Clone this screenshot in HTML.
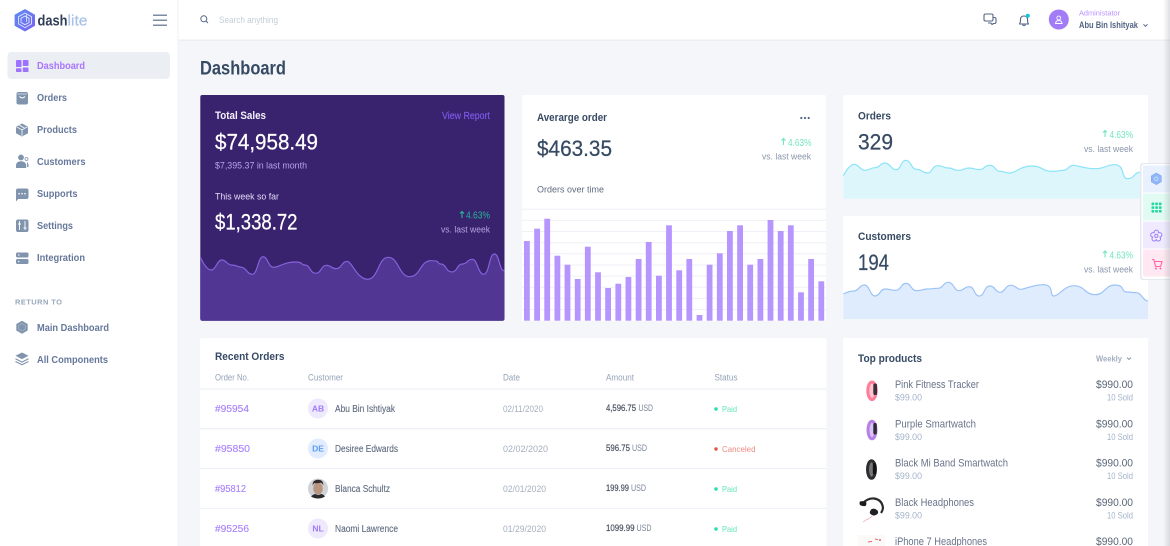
<!DOCTYPE html>
<html lang="en"><head><meta charset="utf-8"><title>Dashboard</title>
<style>
html,body{margin:0;padding:0;width:1170px;height:546px;overflow:hidden;background:#f5f6fa}
svg{display:block;filter:blur(.35px)}
text{font-family:"Liberation Sans",sans-serif;font-size:9.5px}
.n{font-size:10.5px;font-weight:700;fill:#66789a}
.h{font-size:11px;font-weight:700;fill:#364a63}
.big{font-size:22px;fill:#364a63;stroke:#364a63;stroke-width:.25}
.w{font-size:22px;fill:#fff;stroke:#fff;stroke-width:.25}
.up{font-size:10px;fill:#6fe6c0}
.vs{font-size:9.6px;fill:#8a96aa}
.th{font-size:9px;fill:#95a3b8}
.id{font-size:10px;fill:#a882ff;stroke:#a882ff;stroke-width:.12}
.nm{font-size:9.8px;fill:#5f6b80;stroke:#5f6b80;stroke-width:.12}
.dt{font-size:9.6px;fill:#a4afbf}
.am{font-size:9.2px;fill:#505866;stroke:#505866;stroke-width:.25}
.us{font-size:9.2px;fill:#7b8698}
.st{font-size:8px}
.in{font-size:8.5px;font-weight:700;text-anchor:middle}
.pn{font-size:10.6px;fill:#68738a}
.ps{font-size:9.6px;fill:#a3b3c8}
.pr{font-size:10.6px;fill:#5a6678}
</style></head><body>
<svg width="1170" height="546" viewBox="0 0 1170 546" xmlns="http://www.w3.org/2000/svg">
<defs><linearGradient id="lg" x1="0" y1="0" x2="1" y2="1"><stop offset="0" stop-color="#5b8df0"/><stop offset="1" stop-color="#7c63ee"/></linearGradient>
<linearGradient id="edge" x1="0" x2="1" y1="0" y2="0"><stop offset="0" stop-color="#8a8f9a" stop-opacity="0"/><stop offset="1" stop-color="#8a8f9a" stop-opacity=".28"/></linearGradient></defs>
<rect width="1170" height="546" fill="#f5f6fa"/>

<!-- header + sidebar -->
<rect x="178" y="39" width="992" height="2" fill="#eceef4"/>
<rect x="178" y="0" width="992" height="39.5" fill="#fff"/>
<rect x="0" y="0" width="178" height="546" fill="#fff"/>
<rect x="177.5" y="0" width="1" height="546" fill="#eff1f6"/>

<!-- logo -->
<path d="M25 9l10 5.700v11.100L25 31.500l-10.400-5.700V14.700z" fill="url(#lg)"/>
<g fill="none" stroke="#dfe6fd" stroke-width=".9" stroke-linejoin="round"><path d="M25 13l6.500 3.700v7.200L25 27.600l-6.500-3.700v-7.200z"/><path d="M25 16l4 2.300v4.200L25 24.700l-4-2.200v-4.200z"/><path d="M26.500 14.500v7.300"/></g>
<text x="37.500" y="25.500" font-weight="700" style="font-size:15px;fill:#2f3d55" textLength="30" lengthAdjust="spacingAndGlyphs">dash</text>
<text x="67.500" y="25.500" style="font-size:15px;fill:#a7c1e6;stroke:#a7c1e6;stroke-width:.2" textLength="20" lengthAdjust="spacingAndGlyphs">lite</text>
<g stroke="#526484" stroke-width="1.200"><path d="M153 15.200h14M153 20.200h14M153 25.200h14"/></g>

<!-- sidebar -->
<rect x="7.500" y="52" width="162.500" height="27" rx="4" fill="#ebeef2"/>
<g fill="#9d72ff"><rect x="16" y="60" width="5.500" height="7" rx=".8"/><rect x="16" y="68.300" width="5.500" height="3.700" rx=".8"/><rect x="22.800" y="60" width="5.700" height="6" rx=".8"/><rect x="22.800" y="67.500" width="5.700" height="4.500" rx=".8"/></g>
<text x="37" y="69" style="font-size:10.500px;font-weight:700;fill:#a875ff" textLength="48" lengthAdjust="spacingAndGlyphs">Dashboard</text>
<g fill="#8094ae">
<rect x="16.500" y="92" width="11.500" height="12.500" rx="2"/><path d="M19.500 96.500q2.700 3 5.500 0" fill="none" stroke="#fff" stroke-width="1"/><path d="M17.500 94h9.500" stroke="#d8dfe9" stroke-width=".8"/>
<path d="M22 123.500l6 3.200v6.600l-6 3.200-6-3.200v-6.600z"/><path d="M16.500 126.800l5.500 3 5.500-3M22 130v6" fill="none" stroke="#fff" stroke-width=".8"/><path d="M19 125l5.500 3" stroke="#fff" stroke-width=".8"/>
<circle cx="21" cy="157.500" r="2.900"/><path d="M16 168v-3q.5-3.800 5-3.800t5.200 3.800v3z"/><circle cx="26.500" cy="159" r="1.500" fill="none" stroke="#8094ae" stroke-width=".8"/><path d="M27 162q1.700 1 1.500 5h-1.400z"/>
<path d="M16 190.500q0-2 2-2h8.500q2 0 2 2v6.500q0 2-2 2h-8.300l-2.200 2.500z"/>
<rect x="16" y="219.500" width="12.500" height="12.500" rx="2"/>
<rect x="16" y="252.500" width="12.500" height="5" rx="1.500"/><rect x="16" y="259" width="12.500" height="5" rx="1.500"/>
<path d="M22 320.800l5.700 3.200v6.500l-5.700 3.200-5.700-3.200v-6.500z"/>
<path d="M22 352.500l6.500 3.300-6.500 3.300-6.500-3.300z"/><path d="M15.500 358.800l6.500 3.300 6.500-3.300M15.500 361.500l6.500 3.300 6.500-3.300" fill="none" stroke="#8094ae" stroke-width="1.100"/>
</g>
<g fill="#fff"><circle cx="19" cy="193.700" r=".8"/><circle cx="22" cy="193.700" r=".8"/><circle cx="25" cy="193.700" r=".8"/><circle cx="18.800" cy="255" r=".7"/><circle cx="18.800" cy="261.500" r=".7"/></g>
<path d="M19.500 221v9M25 221v9M18 224h3M23.500 228h3" stroke="#fff" stroke-width=".9"/>
<path d="M22 323.500l3.300 1.900v3.700L22 331l-3.300-1.900v-3.700z" fill="none" stroke="#aab7c9" stroke-width=".7"/>
<text x="37" y="101" class="n" textLength="30" lengthAdjust="spacingAndGlyphs">Orders</text>
<text x="37" y="133" class="n" textLength="40" lengthAdjust="spacingAndGlyphs">Products</text>
<text x="37" y="165" class="n" textLength="48.500" lengthAdjust="spacingAndGlyphs">Customers</text>
<text x="37" y="197" class="n" textLength="40.500" lengthAdjust="spacingAndGlyphs">Supports</text>
<text x="37" y="229" class="n" textLength="36" lengthAdjust="spacingAndGlyphs">Settings</text>
<text x="37" y="261" class="n" textLength="48" lengthAdjust="spacingAndGlyphs">Integration</text>
<text x="15" y="304.500" style="font-size:7.500px;font-weight:700;fill:#98a8bd" textLength="47">RETURN TO</text>
<text x="37" y="331" class="n" textLength="72" lengthAdjust="spacingAndGlyphs">Main Dashboard</text>
<text x="37" y="363" class="n" textLength="71" lengthAdjust="spacingAndGlyphs">All Components</text>

<!-- top header -->
<circle cx="203.800" cy="18.800" r="3" fill="none" stroke="#526484" stroke-width="1"/><path d="M206 21l2 2" stroke="#526484" stroke-width="1"/>
<text x="219" y="23" style="font-size:9px;fill:#c4cdd8" textLength="59" lengthAdjust="spacingAndGlyphs">Search anything</text>
<g fill="none" stroke="#526484" stroke-width="1.100" stroke-linejoin="round"><path d="M984 15.500q0-1.500 1.500-1.500h6q1.500 0 1.500 1.500v4q0 1.500-1.500 1.500h-6q-1.500 0-1.500-1.500z" /><path d="M993.500 17.500h1q1.500 0 1.500 1.500v3q0 1.500-1.500 1.500h-1l-1.500 1-1-1.500h-3"/>
<path d="M1019.500 24q1-1.500 1-4.500 0-3.500 3.500-3.500t3.500 3.500q0 3 1 4.500zM1022.500 24.500q1.500 2.500 3 0"/></g>
<circle cx="1027.800" cy="15.800" r="2" fill="#17c4dc"/>
<circle cx="1058.800" cy="19.500" r="10" fill="#a27cf7"/>
<circle cx="1058.800" cy="18" r="1.900" fill="none" stroke="#fff" stroke-width=".9"/><path d="M1055.500 23.500q.5-3 3.300-3t3.300 3z" fill="none" stroke="#fff" stroke-width=".9"/>
<text x="1079" y="15.500" style="font-size:7.500px;fill:#b992ff" textLength="41" lengthAdjust="spacingAndGlyphs">Administator</text>
<text x="1079" y="28" style="font-size:9px;font-weight:700;fill:#526484" textLength="59" lengthAdjust="spacingAndGlyphs">Abu Bin Ishityak</text>
<path d="M1143.500 24.300l2 2 2-2" fill="none" stroke="#526484" stroke-width="1"/>

<text x="200" y="74.500" style="font-size:19px;font-weight:700;fill:#364a63" textLength="86" lengthAdjust="spacingAndGlyphs">Dashboard</text>

<!-- Total Sales -->
<rect x="200.300" y="95" width="304.200" height="225.700" rx="2" fill="#39236f"/>
<path d="M200.300 257.300S206 270 211 270S217 260 221.700 260S227 265 231.700 265S237 267 241.700 267.300S247 274.300 252.300 274.300S258 256.700 263 256.700S268 267.300 273.700 267.300S284 262 294.300 262S300 265 305 265S310 273.300 315.700 273.300S321 265.300 326.300 265.300S331 268.700 336.300 268.700S342 261.300 347 261.300S357 279.300 367.700 279.300S378 257.300 388.300 257.300S399 276.700 409.700 276.700S420 260.700 431 260.700S436 264 441 264S446 272 451.700 272S457 264 462.300 264S467 259.300 472.300 259.300S478 274.300 483.700 274.300S489 254 494.300 254S499 270.700 504.300 270.700V318.700q0 2-2 2H202.300q-2 0-2-2Z" fill="#523694"/>
<path d="M200.300 257.300S206 270 211 270S217 260 221.700 260S227 265 231.700 265S237 267 241.700 267.300S247 274.300 252.300 274.300S258 256.700 263 256.700S268 267.300 273.700 267.300S284 262 294.300 262S300 265 305 265S310 273.300 315.700 273.300S321 265.300 326.300 265.300S331 268.700 336.300 268.700S342 261.300 347 261.300S357 279.300 367.700 279.300S378 257.300 388.300 257.300S399 276.700 409.700 276.700S420 260.700 431 260.700S436 264 441 264S446 272 451.700 272S457 264 462.300 264S467 259.300 472.300 259.300S478 274.300 483.700 274.300S489 254 494.300 254S499 270.700 504.300 270.700" fill="none" stroke="#8661d9" stroke-width="1.200"/>
<text x="215" y="119" style="font-size:11px;font-weight:700;fill:#f4f1fb" textLength="51" lengthAdjust="spacingAndGlyphs">Total Sales</text>
<text x="442" y="119" style="font-size:10px;fill:#7f58ea;stroke:#7f58ea;stroke-width:.15" textLength="48" lengthAdjust="spacingAndGlyphs">View Report</text>
<text x="215" y="149.300" class="w" textLength="103" lengthAdjust="spacingAndGlyphs">$74,958.49</text>
<text x="215" y="168.300" style="font-size:9.600px;fill:#b7a4ea" textLength="92" lengthAdjust="spacingAndGlyphs">$7,395.37 in last month</text>
<text x="215" y="199.500" style="font-size:9.600px;fill:#e3dcf6" textLength="64" lengthAdjust="spacingAndGlyphs">This week so far</text>
<text x="215" y="229.500" class="w" textLength="82.500" lengthAdjust="spacingAndGlyphs">$1,338.72</text>
<path d="M462 218v-6.500M460 213.500l2-2 2 2" stroke="#26b893" stroke-width="1.100" fill="none"/>
<text x="466" y="218.500" style="font-size:10px;fill:#26b893" textLength="24" lengthAdjust="spacingAndGlyphs">4.63%</text>
<text x="441" y="232.500" style="font-size:9.600px;fill:#b4a3de" textLength="49" lengthAdjust="spacingAndGlyphs">vs. last week</text>

<!-- Average order -->
<rect x="522" y="95" width="304" height="114" rx="2" fill="#fff"/>
<rect x="522" y="209" width="304" height="112" fill="#fff"/>
<path d="M522 209.300h304M522 220.400h304M522 231.500h304M522 242.700h304M522 253.800h304M522 265h304M522 276.100h304M522 287.300h304M522 298.400h304M522 309.500h304" stroke="#eff0f8" stroke-width="1"/>
<text x="537" y="121" class="h" textLength="70" lengthAdjust="spacingAndGlyphs">Averarge order</text>
<g fill="#526484"><circle cx="801.300" cy="118" r="1.100"/><circle cx="805" cy="118" r="1.100"/><circle cx="808.700" cy="118" r="1.100"/></g>
<text x="537" y="156" class="big" textLength="75" lengthAdjust="spacingAndGlyphs">$463.35</text>
<path d="M783.500 145v-6.500M781.500 140.500l2-2 2 2" stroke="#6fe6c0" stroke-width="1.100" fill="none"/>
<text x="788" y="146" class="up" textLength="23.500" lengthAdjust="spacingAndGlyphs">4.63%</text>
<text x="762" y="159.500" class="vs" textLength="49" lengthAdjust="spacingAndGlyphs">vs. last week</text>
<text x="537" y="192.500" style="font-size:9.600px;fill:#5f6b80" textLength="67" lengthAdjust="spacingAndGlyphs">Orders over time</text>
<g fill="#b695fe">
<rect x="524" y="241" width="5.800" height="79.700"/><rect x="534.200" y="228.700" width="5.800" height="92"/><rect x="544.300" y="218.700" width="5.800" height="102"/><rect x="554.500" y="255.700" width="5.800" height="65"/><rect x="564.600" y="264.700" width="5.800" height="56"/><rect x="574.800" y="279" width="5.800" height="41.700"/><rect x="584.900" y="246.700" width="5.800" height="74"/><rect x="595.100" y="272.300" width="5.800" height="48.400"/><rect x="605.200" y="288" width="5.800" height="32.700"/><rect x="615.400" y="283.700" width="5.800" height="37"/><rect x="625.500" y="277" width="5.800" height="43.700"/><rect x="635.700" y="259" width="5.800" height="61.700"/><rect x="645.800" y="242" width="5.800" height="78.700"/><rect x="656" y="275.700" width="5.800" height="45"/><rect x="666.100" y="225.300" width="5.800" height="95.400"/><rect x="676.300" y="270.300" width="5.800" height="50.400"/><rect x="686.400" y="259" width="5.800" height="61.700"/><rect x="696.600" y="315" width="5.800" height="5.700"/><rect x="706.700" y="264.700" width="5.800" height="56"/><rect x="716.900" y="253.300" width="5.800" height="67.400"/><rect x="727" y="231" width="5.800" height="89.700"/><rect x="737.200" y="225.300" width="5.800" height="95.400"/><rect x="747.300" y="264.700" width="5.800" height="56"/><rect x="757.500" y="259" width="5.800" height="61.700"/><rect x="767.600" y="220" width="5.800" height="100.700"/><rect x="777.800" y="231" width="5.800" height="89.700"/><rect x="787.900" y="225.300" width="5.800" height="95.400"/><rect x="798.100" y="292.300" width="5.800" height="28.400"/><rect x="808.200" y="259" width="5.800" height="61.700"/><rect x="818.400" y="281.300" width="5.800" height="39.400"/>
</g>

<!-- Orders card -->
<rect x="843" y="95" width="305" height="103.700" rx="2" fill="#fff"/>
<path d="M843.300 175.700S849 164.300 854 164.300S860 170.300 865 170.300S870 167.700 875 167.700S880 163 885 163S891 169.700 896 169.700S901 160.300 906 160.300S911 169.300 916.700 169.300S922 173 927.300 173S932 165.700 937.700 165.700S943 168 948.300 168S953 170.300 958.300 170.300S964 168 969.300 168S974 169.700 979.300 169.700S984 165.300 989.700 165.300S995 171.300 1000 171.300S1005 173 1010 173S1021 166 1031.700 166S1042 171.300 1051.700 171.300S1058 170.300 1063.300 170.300S1068 165.300 1073.300 165.300S1084 168.700 1095 168.700S1105 164.700 1115 164.700S1121 178.700 1127.700 178.700S1134 172.300 1140 172.300H1148V198.700H843.300Z" fill="#dcf6fc"/>
<path d="M843.300 175.700S849 164.300 854 164.300S860 170.300 865 170.300S870 167.700 875 167.700S880 163 885 163S891 169.700 896 169.700S901 160.300 906 160.300S911 169.300 916.700 169.300S922 173 927.300 173S932 165.700 937.700 165.700S943 168 948.300 168S953 170.300 958.300 170.300S964 168 969.300 168S974 169.700 979.300 169.700S984 165.300 989.700 165.300S995 171.300 1000 171.300S1005 173 1010 173S1021 166 1031.700 166S1042 171.300 1051.700 171.300S1058 170.300 1063.300 170.300S1068 165.300 1073.300 165.300S1084 168.700 1095 168.700S1105 164.700 1115 164.700S1121 178.700 1127.700 178.700S1134 172.300 1140 172.300H1148" fill="none" stroke="#8ae3f9" stroke-width="1.200"/>
<text x="858" y="119.500" class="h" textLength="33" lengthAdjust="spacingAndGlyphs">Orders</text>
<text x="858" y="149.500" class="big" textLength="35" lengthAdjust="spacingAndGlyphs">329</text>
<path d="M1105 137v-6.500M1103 132.500l2-2 2 2" stroke="#6fe6c0" stroke-width="1.100" fill="none"/>
<text x="1109.500" y="138" class="up" textLength="23.500" lengthAdjust="spacingAndGlyphs">4.63%</text>
<text x="1084" y="152" class="vs" textLength="49" lengthAdjust="spacingAndGlyphs">vs. last week</text>

<!-- Customers card -->
<rect x="843" y="216" width="305" height="103" rx="2" fill="#fff"/>
<path d="M843.300 294S849 291 854 291S859 285 864.300 285S870 296 875 296S880 289 885 289S891 290.300 896 290.300S901 283.300 906 283.300S911 290.700 916.700 290.700S922 289 927.300 289S932 288.300 937.700 288.300S943 282.300 948.300 282.300S954 290.700 959 290.700S964 286.700 969.300 286.700S974 296 979.300 296S984 286 989.700 286S995 292.300 1000 292.300S1005 285.300 1010.700 285.300S1016 289.300 1020.700 289.300S1032 284.700 1043.300 284.700S1049 296 1054 296S1064 285.700 1074.300 285.700S1085 294.700 1095 294.700S1105 285 1115 285S1121 292 1126.700 292S1132 292.700 1136.700 292.700S1143 301 1148 301V319H843.300Z" fill="#dfecfd"/>
<path d="M843.300 294S849 291 854 291S859 285 864.300 285S870 296 875 296S880 289 885 289S891 290.300 896 290.300S901 283.300 906 283.300S911 290.700 916.700 290.700S922 289 927.300 289S932 288.300 937.700 288.300S943 282.300 948.300 282.300S954 290.700 959 290.700S964 286.700 969.300 286.700S974 296 979.300 296S984 286 989.700 286S995 292.300 1000 292.300S1005 285.300 1010.700 285.300S1016 289.300 1020.700 289.300S1032 284.700 1043.300 284.700S1049 296 1054 296S1064 285.700 1074.300 285.700S1085 294.700 1095 294.700S1105 285 1115 285S1121 292 1126.700 292S1132 292.700 1136.700 292.700S1143 301 1148 301" fill="none" stroke="#9cc3f7" stroke-width="1.200"/>
<text x="858" y="240" class="h" textLength="53" lengthAdjust="spacingAndGlyphs">Customers</text>
<text x="858" y="270" class="big" textLength="31" lengthAdjust="spacingAndGlyphs">194</text>
<path d="M1105 257.500v-6.500M1103 253l2-2 2 2" stroke="#6fe6c0" stroke-width="1.100" fill="none"/>
<text x="1109.500" y="258.500" class="up" textLength="23.500" lengthAdjust="spacingAndGlyphs">4.63%</text>
<text x="1084" y="272.500" class="vs" textLength="49" lengthAdjust="spacingAndGlyphs">vs. last week</text>

<!-- Recent Orders -->
<rect x="200" y="338" width="626.500" height="210" rx="2" fill="#fff"/>
<text x="215" y="360" class="h" textLength="69.500" lengthAdjust="spacingAndGlyphs">Recent Orders</text>
<text x="215" y="380.500" class="th" textLength="34" lengthAdjust="spacingAndGlyphs">Order No.</text>
<text x="308" y="380.500" class="th" textLength="35" lengthAdjust="spacingAndGlyphs">Customer</text>
<text x="503" y="380.500" class="th" textLength="17" lengthAdjust="spacingAndGlyphs">Date</text>
<text x="606" y="380.500" class="th" textLength="28" lengthAdjust="spacingAndGlyphs">Amount</text>
<text x="714.500" y="380.500" class="th" textLength="23" lengthAdjust="spacingAndGlyphs">Status</text>
<path d="M200 389h626.500M200 428.700h626.500M200 468.600h626.500M200 508.400h626.500" stroke="#eff1f7" stroke-width="1.300"/>

<text x="215" y="412" class="id" textLength="34" lengthAdjust="spacingAndGlyphs">#95954</text>
<circle cx="318" cy="408.500" r="10" fill="#efe9fe"/><text x="318" y="411.500" class="in" fill="#a07bf7">AB</text>
<text x="335" y="411.800" class="nm" textLength="60" lengthAdjust="spacingAndGlyphs">Abu Bin Ishtiyak</text>
<text x="503" y="412" class="dt" textLength="40" lengthAdjust="spacingAndGlyphs">02/11/2020</text>
<text x="606" y="411" class="am" textLength="30" lengthAdjust="spacingAndGlyphs">4,596.75</text><text x="638.500" y="411" class="us" textLength="14.500" lengthAdjust="spacingAndGlyphs">USD</text>
<circle cx="716" cy="409" r="1.700" fill="#1ee0ac"/><text x="722" y="411.800" class="st" fill="#62e3bb" textLength="15" lengthAdjust="spacingAndGlyphs">Paid</text>

<text x="215" y="452" class="id" textLength="35" lengthAdjust="spacingAndGlyphs">#95850</text>
<circle cx="318" cy="448.500" r="10" fill="#e1edfe"/><text x="318" y="451.500" class="in" fill="#5b9bf5">DE</text>
<text x="335" y="451.800" class="nm" textLength="63" lengthAdjust="spacingAndGlyphs">Desiree Edwards</text>
<text x="503" y="452" class="dt" textLength="45" lengthAdjust="spacingAndGlyphs">02/02/2020</text>
<text x="606" y="451" class="am" textLength="24" lengthAdjust="spacingAndGlyphs">596.75</text><text x="632" y="451" class="us" textLength="15" lengthAdjust="spacingAndGlyphs">USD</text>
<circle cx="716" cy="449" r="1.700" fill="#e85347"/><text x="722" y="451.800" class="st" fill="#f08a80" textLength="33.500" lengthAdjust="spacingAndGlyphs">Canceled</text>

<text x="215" y="492" class="id" textLength="31" lengthAdjust="spacingAndGlyphs">#95812</text>
<circle cx="318" cy="488.500" r="10" fill="#cfd2d6"/><ellipse cx="318" cy="488.500" rx="4.800" ry="6" fill="#b9947f"/><path d="M312.800 486q-.8-6 5.200-6.200 5.500 0 5.300 5.700-1-2.500-3-2.700-3 .8-6 .3-1.200 1-1.500 2.900z" fill="#33292a"/><path d="M311 496.500q2.500-2.500 4.500-2.500 2.500 2 5.500 0 2 0 4 2.500-3 2-7 2t-7-2z" fill="#2a2b2f"/>
<text x="335" y="491.800" class="nm" textLength="55" lengthAdjust="spacingAndGlyphs">Blanca Schultz</text>
<text x="503" y="492" class="dt" textLength="43" lengthAdjust="spacingAndGlyphs">02/01/2020</text>
<text x="606" y="491" class="am" textLength="23" lengthAdjust="spacingAndGlyphs">199.99</text><text x="631" y="491" class="us" textLength="15" lengthAdjust="spacingAndGlyphs">USD</text>
<circle cx="716" cy="489" r="1.700" fill="#1ee0ac"/><text x="722" y="491.800" class="st" fill="#62e3bb" textLength="15" lengthAdjust="spacingAndGlyphs">Paid</text>

<text x="215" y="532" class="id" textLength="34" lengthAdjust="spacingAndGlyphs">#95256</text>
<circle cx="318" cy="528.500" r="10" fill="#efe9fe"/><text x="318" y="531.500" class="in" fill="#a07bf7">NL</text>
<text x="335" y="531.800" class="nm" textLength="63" lengthAdjust="spacingAndGlyphs">Naomi Lawrence</text>
<text x="503" y="532" class="dt" textLength="43" lengthAdjust="spacingAndGlyphs">01/29/2020</text>
<text x="606" y="531" class="am" textLength="28.500" lengthAdjust="spacingAndGlyphs">1099.99</text><text x="636.500" y="531" class="us" textLength="15" lengthAdjust="spacingAndGlyphs">USD</text>
<circle cx="716" cy="529" r="1.700" fill="#1ee0ac"/><text x="722" y="531.800" class="st" fill="#62e3bb" textLength="15" lengthAdjust="spacingAndGlyphs">Paid</text>

<!-- Top products -->
<rect x="843" y="338" width="305" height="210" rx="2" fill="#fff"/>
<text x="858" y="362" class="h" textLength="64" lengthAdjust="spacingAndGlyphs">Top products</text>
<text x="1096" y="361.500" style="font-size:8.500px;font-weight:700;fill:#a3aec0" textLength="26" lengthAdjust="spacingAndGlyphs">Weekly</text>
<path d="M1127 357.500l2 2 2-2" fill="none" stroke="#8094ae" stroke-width=".9"/>

<ellipse cx="872" cy="390.800" rx="4.200" ry="8.800" fill="#ffc4d0" stroke="#ff7d98" stroke-width="3"/><rect x="873.300" y="383.500" width="3.800" height="11.500" rx="1.800" fill="#3a3038"/>
<text x="895" y="388" class="pn" textLength="84" lengthAdjust="spacingAndGlyphs">Pink Fitness Tracker</text><text x="895" y="400.500" class="ps" textLength="27" lengthAdjust="spacingAndGlyphs">$99.00</text>
<text x="1096" y="388" class="pr" textLength="37" lengthAdjust="spacingAndGlyphs">$990.00</text><text x="1107" y="400.500" class="ps" textLength="26" lengthAdjust="spacingAndGlyphs">10 Sold</text>

<ellipse cx="872" cy="430" rx="4" ry="8.800" fill="#dcc2f4" stroke="#b67fe6" stroke-width="3"/><rect x="873.300" y="423" width="3.500" height="11.500" rx="1.700" fill="#2e2a34"/>
<text x="895" y="427.300" class="pn" textLength="81" lengthAdjust="spacingAndGlyphs">Purple Smartwatch</text><text x="895" y="439.800" class="ps" textLength="27" lengthAdjust="spacingAndGlyphs">$99.00</text>
<text x="1096" y="427.300" class="pr" textLength="37" lengthAdjust="spacingAndGlyphs">$990.00</text><text x="1107" y="439.800" class="ps" textLength="26" lengthAdjust="spacingAndGlyphs">10 Sold</text>

<ellipse cx="871.500" cy="469.500" rx="4" ry="8.800" fill="#77777a" stroke="#2e2e30" stroke-width="3"/><rect x="872.800" y="463" width="3.400" height="11.500" rx="1.700" fill="#141416"/>
<text x="895" y="466.600" class="pn" textLength="113" lengthAdjust="spacingAndGlyphs">Black Mi Band Smartwatch</text><text x="895" y="479.100" class="ps" textLength="27" lengthAdjust="spacingAndGlyphs">$99.00</text>
<text x="1096" y="466.600" class="pr" textLength="37" lengthAdjust="spacingAndGlyphs">$990.00</text><text x="1107" y="479.100" class="ps" textLength="26" lengthAdjust="spacingAndGlyphs">10 Sold</text>

<path d="M863 503q5-5 11-4.500 8 1 9 9.500-.5 3-2 5" fill="none" stroke="#29292b" stroke-width="2.200"/><path d="M860 501.500q3-1 6 .5 1 2-.5 4-3 .5-5.500-1-1-2 0-3.500z" fill="#1d1d1f"/><path d="M871 509.500q3-2 6 .5 2 2 .5 4-3 2.500-5.500 1-3-1.500-2-3.500z" fill="#202022"/><path d="M872 516q-3 3-6 4l-3 2" fill="none" stroke="#eda9ae" stroke-width=".7"/>
<text x="895" y="506" class="pn" textLength="79" lengthAdjust="spacingAndGlyphs">Black Headphones</text><text x="895" y="518.500" class="ps" textLength="27" lengthAdjust="spacingAndGlyphs">$99.00</text>
<text x="1096" y="506" class="pr" textLength="37" lengthAdjust="spacingAndGlyphs">$990.00</text><text x="1107" y="518.500" class="ps" textLength="26" lengthAdjust="spacingAndGlyphs">10 Sold</text>

<rect x="858" y="535" width="27" height="11" fill="#fcf9f9"/><path d="M868 542q2-.5 4-.5M875 539l3 .8" fill="none" stroke="#e8646e" stroke-width="1"/><circle cx="880" cy="540" r="1" fill="#e8646e"/>
<text x="895" y="545" class="pn" textLength="92" lengthAdjust="spacingAndGlyphs">iPhone 7 Headphones</text>
<text x="1096" y="545" class="pr" textLength="37" lengthAdjust="spacingAndGlyphs">$990.00</text>

<!-- right toolbar -->
<rect x="1140" y="163" width="34" height="117" rx="3" fill="#e6e8f0"/>
<rect x="1141.500" y="164" width="32" height="115" rx="2.500" fill="#fff"/>
<rect x="1143" y="165.500" width="27" height="27" fill="#e9f1fe"/>
<rect x="1143" y="193.500" width="27" height="27" fill="#e2fbf2"/>
<rect x="1143" y="221.500" width="27" height="27" fill="#efeafe"/>
<rect x="1143" y="249.500" width="27" height="27" fill="#ffe8f1"/>
<path d="M1156.300 173l5 2.900v5.800l-5 2.900-5-2.900v-5.800z" fill="#8fb6f7" stroke="#7ea9f3" stroke-width=".6"/><circle cx="1156.300" cy="178.800" r="1.800" fill="none" stroke="#dbe8fd" stroke-width=".7"/>
<g fill="#26d9a0"><rect x="1151.500" y="202.500" width="2.700" height="2.700" rx=".7"/><rect x="1155.200" y="202.500" width="2.700" height="2.700" rx=".7"/><rect x="1158.900" y="202.500" width="2.700" height="2.700" rx=".7"/><rect x="1151.500" y="206.200" width="2.700" height="2.700" rx=".7"/><rect x="1155.200" y="206.200" width="2.700" height="2.700" rx=".7"/><rect x="1158.900" y="206.200" width="2.700" height="2.700" rx=".7"/><rect x="1151.500" y="209.900" width="2.700" height="2.700" rx=".7"/><rect x="1155.200" y="209.900" width="2.700" height="2.700" rx=".7"/><rect x="1158.900" y="209.900" width="2.700" height="2.700" rx=".7"/></g>
<g fill="none" stroke="#9d7ff6" stroke-width="1"><circle cx="1156.300" cy="232.300" r="2.200"/><circle cx="1159.700" cy="234.800" r="2.200"/><circle cx="1158.400" cy="238.800" r="2.200"/><circle cx="1154.200" cy="238.800" r="2.200"/><circle cx="1152.900" cy="234.800" r="2.200"/></g><circle cx="1156.300" cy="235.900" r="3.400" fill="#efeafe"/><circle cx="1156.300" cy="235.900" r="1.600" fill="none" stroke="#9d7ff6" stroke-width="1"/>
<path d="M1152 259.500h1.800l1.800 7h5l1.500-5h-7.800" fill="none" stroke="#ff63a5" stroke-width="1.100" stroke-linejoin="round"/><circle cx="1156" cy="268.500" r="1" fill="#ff63a5"/><circle cx="1160.500" cy="268.500" r="1" fill="#ff63a5"/>

<rect x="1163" y="0" width="7" height="546" fill="url(#edge)"/>
</svg>
</body></html>
